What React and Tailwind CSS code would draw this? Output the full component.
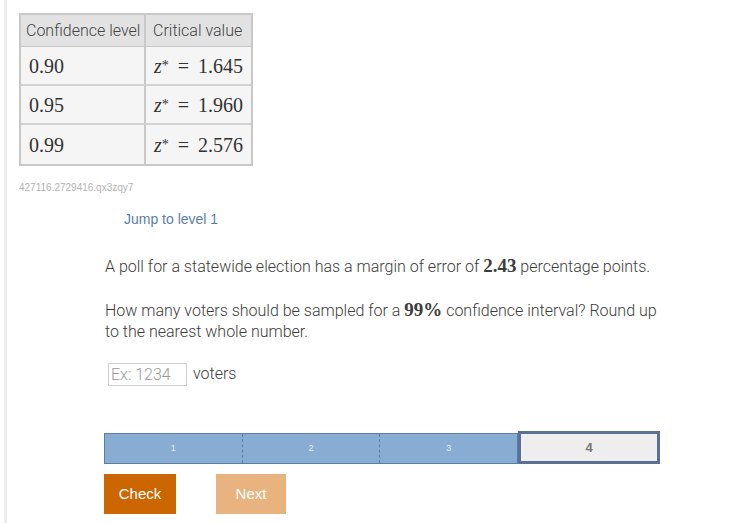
import React from "react";

const rows = [
  { level: "0.90", z: "1.645" },
  { level: "0.95", z: "1.960" },
  { level: "0.99", z: "2.576" },
];

const math = { fontFamily: '"Liberation Serif", "DejaVu Serif", serif' };
const arial = { fontFamily: '"Liberation Sans", Arial, sans-serif' };

function ZValue({ value }) {
  return (
    <span style={math} className="text-[20px] text-[#333] leading-none">
      <i>z</i>
      <sup className="text-[14px] relative -top-[3px]">*</sup>
      <span className="mx-[9px]">=</span>
      {value}
    </span>
  );
}

export default function App() {
  return (
    <div
      className="w-[748px] h-[523px] bg-white overflow-hidden flex"
      style={{ fontFamily: 'Roboto, "Liberation Sans", sans-serif' }}
    >
      <div className="ml-[4px] w-[3px] h-full bg-[#ececec]" />
      <div className="pl-[12px] pt-[13px] flex-1">
        {/* table */}
        <div className="w-[234px] border-2 border-[#c8c8c8] bg-[#f5f5f5]">
          <div className="flex h-[32px] bg-[#e2e2e2] border-b border-[#c8c8c8] text-[16px] font-light text-[#444]">
            <div className="w-[125px] border-r-2 border-[#c8c8c8] flex items-center pl-[5px]">
              Confidence level
            </div>
            <div className="flex-1 flex items-center pl-[7px]">Critical value</div>
          </div>
          {rows.map((r, i) => (
            <div
              key={r.level}
              className={`flex h-[39px] ${i < rows.length - 1 ? "border-b-2 border-[#d2d2d2]" : ""}`}
            >
              <div
                className="w-[125px] border-r-2 border-[#c8c8c8] flex items-center pl-[8px] text-[20px] text-[#333]"
                style={math}
              >
                {r.level}
              </div>
              <div className="flex-1 flex items-center justify-end pr-[8px]">
                <ZValue value={r.z} />
              </div>
            </div>
          ))}
        </div>

        <div className="mt-[16px] text-[10px] text-[#b4b4b4] font-light leading-[12px]" style={arial}>
          427116.2729416.qx3zqy7
        </div>

        <div className="mt-[15px] ml-[105px] text-[14px] text-[#5b7ea8]" style={arial}>
          Jump to level 1
        </div>

        <div className="ml-[86px] mt-[26px] w-[560px] text-[16px] font-light text-[#3c3c3c] leading-[21px]">
          <p>
            A poll for a statewide election has a margin of error of{" "}
            <span style={math} className="font-bold text-[19px] leading-none">2.43</span> percentage points.
          </p>
          <p className="mt-[23px]">
            How many voters should be sampled for a{" "}
            <span style={math} className="font-bold text-[19px] leading-none">99%</span> confidence interval? Round up
            to the nearest whole number.
          </p>
          <div className="mt-[21px] ml-[3px] flex items-center gap-[6px]">
            <div className="w-[79px] h-[23px] border border-[#cfcfcf] flex items-center pl-[2px] text-[#9a9a9a] text-[16px] font-light">
              Ex: 1234
            </div>
            <span className="-mt-[3px]">voters</span>
          </div>
        </div>

        {/* progress */}
        <div className="ml-[85px] mt-[46px] w-[556px] h-[32px] flex">
          <div className="flex flex-1 mt-[1px] h-[31px] bg-[#88acd2] border border-[#5a7fa6] text-[9px] text-[#e8eef6]" style={arial}>
            <div className="flex-1 flex items-center justify-center border-r border-dashed border-[#5a7fa6]">1</div>
            <div className="flex-1 flex items-center justify-center border-r border-dashed border-[#5a7fa6]">2</div>
            <div className="flex-1 flex items-center justify-center">3</div>
          </div>
          <div
            className="w-[142px] h-[33px] -mt-[1px] bg-[#eeeeee] border-[3px] border-[#5a7094] flex items-center justify-center text-[13px] font-bold text-[#777]"
            style={arial}
          >
            4
          </div>
        </div>

        <div className="ml-[85px] mt-[10px] flex gap-[40px] text-[15px] text-white" style={arial}>
          <button className="w-[72px] h-[40px] bg-[#cc6600]">Check</button>
          <button className="w-[70px] h-[40px] bg-[#e8b37f]">Next</button>
        </div>
      </div>
    </div>
  );
}
